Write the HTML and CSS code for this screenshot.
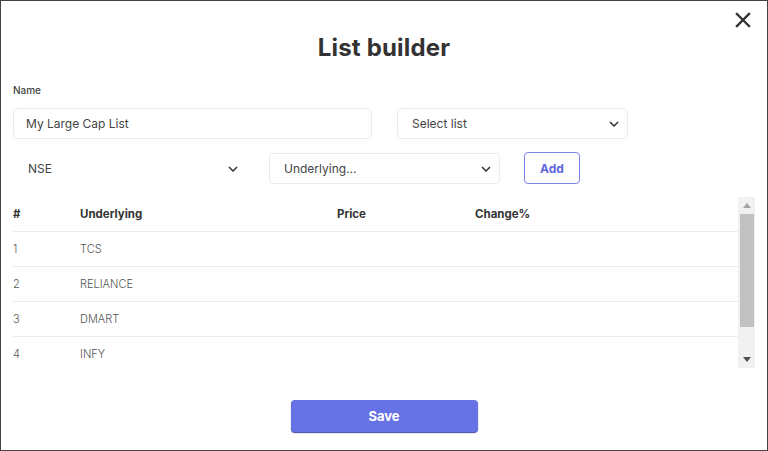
FILE: index.html
```html
<!DOCTYPE html>
<html lang="en">
<head>
  <meta charset="UTF-8">
  <meta name="viewport" content="width=device-width, initial-scale=1.0">
  <title>List builder</title>
  <link rel="stylesheet" href="styles.css">
</head>
<body>
  <div class="modal">
    <!-- Close -->
    <button class="close" aria-label="Close">
      <svg width="16" height="16" viewBox="0 0 16 16">
        <path d="M2 2 L14 14 M14 2 L2 14" stroke="#333" stroke-width="2.4" stroke-linecap="square"/>
      </svg>
    </button>

    <h1 class="title">List builder</h1>

    <!-- Name row -->
    <label class="field-label" for="listName">Name</label>
    <div class="row">
      <input class="input name-input" id="listName" type="text" value="My Large Cap List">
      <div class="select-wrap list-select">
        <select class="select">
          <option>Select list</option>
        </select>
        <svg class="chevron" width="10" height="6" viewBox="0 0 10 6"><path d="M1 1 L5 5 L9 1" fill="none" stroke="#333" stroke-width="1.5"/></svg>
      </div>
    </div>

    <!-- Exchange / underlying row -->
    <div class="row row-second">
      <div class="select-wrap exchange-select">
        <select class="select plain">
          <option>NSE</option>
        </select>
        <svg class="chevron" width="10" height="6" viewBox="0 0 10 6"><path d="M1 1 L5 5 L9 1" fill="none" stroke="#333" stroke-width="1.5"/></svg>
      </div>
      <div class="select-wrap underlying-select">
        <select class="select">
          <option>Underlying...</option>
        </select>
        <svg class="chevron" width="10" height="6" viewBox="0 0 10 6"><path d="M1 1 L5 5 L9 1" fill="none" stroke="#333" stroke-width="1.5"/></svg>
      </div>
      <button class="btn-add">Add</button>
    </div>

    <!-- Table -->
    <div class="table-area">
      <div class="table-wrap">
        <table class="list-table">
          <thead>
            <tr>
              <th class="col-num">#</th>
              <th class="col-name">Underlying</th>
              <th class="col-price">Price</th>
              <th>Change%</th>
            </tr>
          </thead>
          <tbody>
            <tr><td>1</td><td>TCS</td><td></td><td></td></tr>
            <tr><td>2</td><td>RELIANCE</td><td></td><td></td></tr>
            <tr><td>3</td><td>DMART</td><td></td><td></td></tr>
            <tr><td>4</td><td>INFY</td><td></td><td></td></tr>
          </tbody>
        </table>
      </div>
      <div class="scrollbar">
        <div class="scroll-btn">
          <svg width="8" height="5" viewBox="0 0 8 5"><path d="M0 5 L4 0 L8 5 Z" fill="#a3a3a3"/></svg>
        </div>
        <div class="scroll-thumb"></div>
        <div class="scroll-rest"></div>
        <div class="scroll-btn">
          <svg width="8" height="5" viewBox="0 0 8 5"><path d="M0 0 L8 0 L4 5 Z" fill="#505050"/></svg>
        </div>
      </div>
    </div>

    <div class="footer">
      <button class="btn-save">Save</button>
    </div>
  </div>
</body>
</html>
```

FILE: styles.css
```css
/* Reset */
* {
  margin: 0;
  padding: 0;
  box-sizing: border-box;
}
body {
  font-family: Inter, "Open Sans", sans-serif;
  color: #333;
  background-color: #fff;
}

/* Modal */
.modal {
  position: relative;
  height: 451px;
  border: 1px solid #444;
  padding: 0 12px;
  background-color: #fff;
}
.close {
  position: absolute;
  top: 11px;
  right: 16px;
  width: 16px;
  height: 16px;
  border: none;
  background: none;
  cursor: pointer;
}
.title {
  margin-top: 32px;
  font-size: 24px;
  line-height: 30px;
  font-weight: 700;
  text-align: center;
  color: #333;
  letter-spacing: 0.2px;
}

/* Form */
.field-label {
  display: block;
  margin-top: 20px;
  font-size: 10px;
  line-height: 14px;
  font-weight: 500;
  color: #444;
}
.row {
  display: flex;
  align-items: center;
  margin-top: 11px;
}
.row-second {
  margin-top: 13px;
}
.input, .select {
  height: 31px;
  border: 1px solid #ececec;
  border-radius: 4px;
  font-family: inherit;
  font-size: 12px;
  color: #444;
  background-color: #fff;
  outline: none;
}
.input {
  padding: 0 12px;
}
.name-input {
  width: 359px;
}
.select-wrap {
  position: relative;
}
.select {
  width: 100%;
  padding: 0 14px;
  appearance: none;
  -webkit-appearance: none;
}
.select.plain {
  border-color: #fff;
}
.chevron {
  position: absolute;
  top: 13px;
  right: 9px;
  pointer-events: none;
}
.list-select {
  width: 231px;
  margin-left: 25px;
}
.exchange-select {
  width: 234px;
}
.underlying-select {
  width: 231px;
  margin-left: 22px;
}
.btn-add {
  width: 56px;
  height: 32px;
  margin-left: 24px;
  border: 1px solid #7c83e8;
  border-radius: 4px;
  background-color: #fff;
  color: #5f67dc;
  font-family: inherit;
  font-size: 12px;
  font-weight: 700;
  cursor: pointer;
}

/* Table */
.table-area {
  display: flex;
  margin-top: 13px;
  height: 171px;
  width: 742px;
}
.table-wrap {
  flex: 1;
  overflow: hidden;
}
.scrollbar {
  display: flex;
  flex-direction: column;
  width: 17px;
  background-color: #f1f1f1;
}
.scroll-btn {
  display: flex;
  align-items: center;
  justify-content: center;
  height: 17px;
}
.scroll-thumb {
  height: 113px;
  margin: 0 1px 0 2px;
  background-color: #c1c1c1;
}
.scroll-rest {
  flex: 1;
}
.list-table {
  width: 100%;
  border-collapse: collapse;
  font-size: 11px;
}
.list-table th {
  height: 34px;
  text-align: left;
  font-size: 11.5px;
  font-weight: 700;
  color: #333;
  border-bottom: 1px solid #ececec;
}
.list-table td {
  height: 35px;
  color: #555;
  font-weight: 300;
  border-bottom: 1px solid #ececec;
}
.col-num {
  width: 67px;
}
.col-name {
  width: 257px;
}
.col-price {
  width: 138px;
}

/* Footer */
.footer {
  display: flex;
  justify-content: center;
  margin-top: 32px;
}
.btn-save {
  width: 187px;
  height: 32px;
  border: none;
  border-radius: 4px;
  background-color: #6772e5;
  box-shadow: 0 1px 1px #3f46a8;
  color: #fff;
  font-family: inherit;
  font-size: 13px;
  font-weight: 700;
  cursor: pointer;
}
```
